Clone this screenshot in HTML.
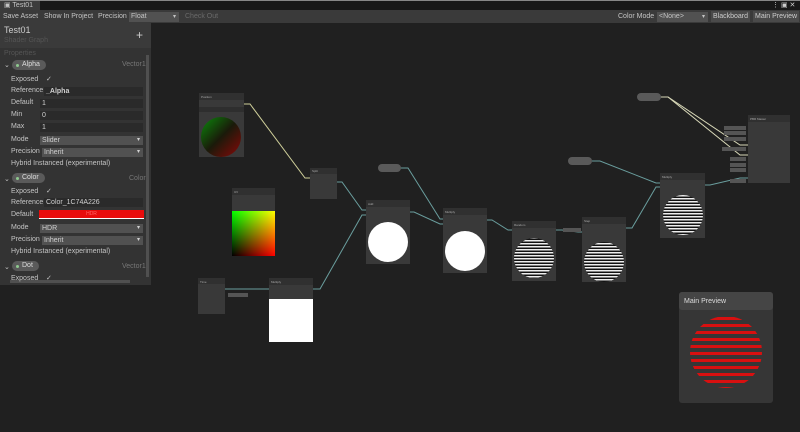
<!DOCTYPE html>
<html><head><style>
*{margin:0;padding:0;box-sizing:border-box}
body{width:800px;height:432px;overflow:hidden;background:#202020;font-family:"Liberation Sans",sans-serif;position:relative;color:#c4c4c4}
.abs{position:absolute}
.t{font-size:7px;white-space:nowrap}
.row{position:absolute;left:11px;font-size:7px;color:#c4c4c4;white-space:nowrap}
.fld{position:absolute;left:40px;width:103px;height:9px;background:#2a2a2a;font-size:7px;padding-left:2px;line-height:9px;color:#d0d0d0}
.dd{position:absolute;left:40px;width:103px;height:9px;background:#515151;font-size:7px;padding-left:2px;line-height:9px;color:#d0d0d0}
.dd:after{content:"▾";position:absolute;right:3px;top:0;font-size:6px}
.pill{position:absolute;height:10px;border-radius:5px;background:#5a5a5a;font-size:7px;line-height:10px;padding:0 6px 0 10px;color:#ddd}
.pill:before{content:"";position:absolute;left:4px;top:4px;width:3px;height:3px;border-radius:2px;background:#8fc98f}
.btn{position:absolute;top:11px;height:11px;background:#4a4a4a;font-size:7px;line-height:11px;padding:0 2px;color:#ccc;white-space:nowrap}
</style></head><body>
<svg class="abs" style="left:0;top:0" width="800" height="432">
<defs>
<linearGradient id="g1" x1="0" y1="0" x2="1" y2="1"><stop offset="0" stop-color="#0a8a0a"/><stop offset="0.5" stop-color="#1a1a0a"/><stop offset="1" stop-color="#8a0808"/></linearGradient>
<linearGradient id="uvx" x1="0" y1="0" x2="1" y2="0"><stop offset="0" stop-color="#000"/><stop offset="1" stop-color="#f00"/></linearGradient>
<linearGradient id="uvy" x1="0" y1="1" x2="0" y2="0"><stop offset="0" stop-color="#000"/><stop offset="1" stop-color="#0f0"/></linearGradient>
<pattern id="str" width="3" height="3" patternUnits="userSpaceOnUse"><rect width="3" height="3" fill="#111"/><rect y="0" width="3" height="1.5" fill="#eee"/></pattern>
<pattern id="str2" width="7" height="7" patternUnits="userSpaceOnUse"><rect width="7" height="7" fill="#363636"/><rect y="2" width="7" height="3" fill="#d81010"/></pattern>
</defs>
<g fill="none" stroke-width="1">
<path d="M242 104 L250 104 L305 178 L312 178" stroke="#cfcf9a"/>
<g stroke="#6a9e9e">
<path d="M334 182 L342 182 L362 210 L368 210"/>
<path d="M310 289 L320 289 L362 215 L368 215"/>
<path d="M400 168 L408 168 L440 219 L446 219"/>
<path d="M407 212 L414 212 L440 224 L446 224"/>
<path d="M484 220 L492 220 L508 230 L514 230"/>
<path d="M552 230 L562 230 L578 232 L584 232"/>
<path d="M623 228 L632 228 L656 187 L662 187"/>
<path d="M592 161 L600 161 L656 183 L662 183"/>
<path d="M702 185 L710 185 L740 178 L750 178"/>
<path d="M224 289 L272 289"/>
</g>
<g stroke="#d8d8b8">
<path d="M660 97 L668 97 L740 145 L750 145"/>
<path d="M660 97 L668 97 L740 155 L750 155"/>
</g>
</g>
<g>
<rect x="199" y="93" width="45" height="64" fill="#393939"/><rect x="199" y="93" width="45" height="7" fill="#303030"/>
<rect x="199" y="107" width="45" height="5" fill="#2e2e2e"/>
<circle cx="221" cy="137" r="20" fill="url(#g1)"/>
<rect x="232" y="188" width="43" height="68" fill="#393939"/><rect x="232" y="188" width="43" height="7" fill="#303030"/>
<rect x="232" y="211" width="43" height="45" fill="url(#uvx)"/><rect x="232" y="211" width="43" height="45" fill="url(#uvy)" style="mix-blend-mode:screen"/>
<rect x="310" y="168" width="27" height="31" fill="#393939"/><rect x="310" y="168" width="27" height="6" fill="#303030"/>
<rect x="366" y="200" width="44" height="64" fill="#393939"/><rect x="366" y="200" width="44" height="7" fill="#303030"/>
<circle cx="388" cy="242" r="20" fill="#fff"/>
<rect x="443" y="208" width="44" height="65" fill="#393939"/><rect x="443" y="208" width="44" height="7" fill="#303030"/>
<circle cx="465" cy="251" r="20" fill="#fff"/>
<rect x="198" y="278" width="27" height="36" fill="#393939"/><rect x="198" y="278" width="27" height="6" fill="#303030"/>
<rect x="269" y="278" width="44" height="64" fill="#393939"/><rect x="269" y="278" width="44" height="7" fill="#303030"/>
<rect x="269" y="299" width="44" height="43" fill="#fff"/>
<rect x="512" y="221" width="44" height="60" fill="#393939"/><rect x="512" y="221" width="44" height="7" fill="#303030"/>
<circle cx="534" cy="258" r="20" fill="url(#str)"/>
<rect x="582" y="217" width="44" height="65" fill="#393939"/><rect x="582" y="217" width="44" height="7" fill="#303030"/>
<circle cx="604" cy="262" r="20" fill="url(#str)"/>
<rect x="660" y="173" width="45" height="65" fill="#393939"/><rect x="660" y="173" width="45" height="7" fill="#303030"/>
<circle cx="683" cy="215" r="20" fill="url(#str)"/>
<rect x="748" y="115" width="42" height="68" fill="#393939"/><rect x="748" y="115" width="42" height="7" fill="#303030"/>
<g fill="#555"><rect x="724" y="126" width="22" height="4"/><rect x="724" y="131" width="22" height="4"/><rect x="724" y="137" width="22" height="4"/><rect x="722" y="147" width="24" height="4"/>
<rect x="730" y="157" width="16" height="4"/><rect x="730" y="163" width="16" height="4"/><rect x="730" y="168" width="16" height="4"/><rect x="730" y="179" width="16" height="4"/>
<rect x="228" y="293" width="20" height="4"/><rect x="563" y="228" width="18" height="4"/></g>
<g fill="#5a5a5a"><rect x="378" y="164" width="23" height="8" rx="4"/><rect x="568" y="157" width="24" height="8" rx="4"/><rect x="637" y="93" width="24" height="8" rx="4"/></g>
<rect x="679" y="292" width="94" height="111" rx="3" fill="#363636"/><rect x="679" y="292" width="94" height="18" rx="3" fill="#454545"/>
<circle cx="726" cy="352" r="36" fill="url(#str2)"/>
</g>
<g fill="#aaa" font-size="3" font-family="Liberation Sans">
<text x="201" y="98">Position</text><text x="234" y="193">UV</text><text x="312" y="172">Split</text><text x="368" y="205">Add</text>
<text x="445" y="213">Multiply</text><text x="200" y="283">Time</text><text x="271" y="283">Multiply</text><text x="514" y="226">Random</text>
<text x="584" y="222">Step</text><text x="662" y="178">Multiply</text><text x="750" y="120">PBR Master</text>
</g>
<text x="684" y="303" fill="#ddd" font-size="7" font-family="Liberation Sans">Main Preview</text>
</svg>
<div class="abs" style="left:0;top:0;width:800px;height:10px;background:#191919"></div>
<div class="abs" style="left:0;top:0;width:800px;height:1px;background:#888"></div>
<div class="abs t" style="left:0;top:1px;width:40px;height:9px;background:#3c3c3c;line-height:9px;padding-left:4px">▣ Test01</div>
<div class="abs t" style="left:772px;top:1px;color:#ccc">⋮ ▣ ✕</div>
<div class="abs" style="left:0;top:10px;width:800px;height:13px;background:#3a3a3a"></div>
<div class="abs t" style="left:3px;top:13px">Save Asset</div>
<div class="abs t" style="left:44px;top:13px">Show In Project</div>
<div class="abs t" style="left:98px;top:13px">Precision</div>
<div class="abs t" style="left:129px;top:12px;width:50px;height:10px;background:#515151;padding-left:2px;line-height:10px">Float <span style="float:right;font-size:6px;padding-right:3px">▾</span></div>
<div class="abs t" style="left:185px;top:13px;color:#6a6a6a">Check Out</div>
<div class="abs t" style="left:618px;top:13px">Color Mode</div>
<div class="abs t" style="left:657px;top:12px;width:51px;height:10px;background:#515151;padding-left:2px;line-height:10px">&lt;None&gt; <span style="float:right;font-size:6px;padding-right:3px">▾</span></div>
<div class="btn" style="left:711px">Blackboard</div>
<div class="btn" style="left:753px">Main Preview</div>
<div class="abs" style="left:0;top:23px;width:151px;height:262px;background:#333"></div>
<div class="abs" style="left:0;top:23px;width:151px;height:25px;background:#3a3a3a"></div>
<div class="abs t" style="left:4px;top:25px;font-size:9px;color:#ccc">Test01</div>
<div class="abs t" style="left:4px;top:37px;color:#555">Shader Graph</div>
<div class="abs t" style="left:136px;top:28px;font-size:12px;color:#ccc">+</div>
<div class="abs t" style="left:4px;top:50px;color:#555">Properties</div>
<div class="abs" style="left:146px;top:55px;width:3px;height:222px;background:#505050"></div>
<div class="abs" style="left:10px;top:280px;width:120px;height:3px;background:#505050"></div>
<div class="abs t" style="left:4px;top:61px">⌄</div>
<div class="pill" style="left:12px;top:60px">Alpha</div>
<div class="abs t" style="left:122px;top:61px;color:#777">Vector1</div>
<div class="row" style="top:75px">Exposed &nbsp;&nbsp;&nbsp;✓</div>
<div class="row" style="top:87px">Reference</div><div class="fld" style="top:87px;font-weight:bold;left:44px;width:99px">_Alpha</div>
<div class="row" style="top:99px">Default</div><div class="fld" style="top:99px">1</div>
<div class="row" style="top:111px">Min</div><div class="fld" style="top:111px">0</div>
<div class="row" style="top:123px">Max</div><div class="fld" style="top:123px">1</div>
<div class="row" style="top:136px">Mode</div><div class="dd" style="top:136px">Slider</div>
<div class="row" style="top:148px">Precision</div><div class="dd" style="top:148px;left:42px;width:101px">Inherit</div>
<div class="row" style="top:160px">Hybrid Instanced (experimental)</div>
<div class="abs t" style="left:4px;top:175px">⌄</div>
<div class="pill" style="left:12px;top:173px">Color</div>
<div class="abs t" style="left:129px;top:175px;color:#777">Color</div>
<div class="row" style="top:187px">Exposed &nbsp;&nbsp;&nbsp;✓</div>
<div class="row" style="top:199px">Reference</div><div class="fld" style="top:198px;left:44px;width:99px">Color_1C74A226</div>
<div class="row" style="top:211px">Default</div><div class="abs" style="left:39px;top:210px;width:105px;height:9px;background:#e80c0c;font-size:5px;color:#f66;text-align:center;line-height:9px;border-bottom:1px solid #fff">HDR</div>
<div class="row" style="top:224px">Mode</div><div class="dd" style="top:224px">HDR</div>
<div class="row" style="top:236px">Precision</div><div class="dd" style="top:236px;left:42px;width:101px">Inherit</div>
<div class="row" style="top:248px">Hybrid Instanced (experimental)</div>
<div class="abs t" style="left:4px;top:263px">⌄</div>
<div class="pill" style="left:12px;top:261px">Dot</div>
<div class="abs t" style="left:122px;top:263px;color:#777">Vector1</div>
<div class="row" style="top:274px">Exposed &nbsp;&nbsp;&nbsp;✓</div>
</body></html>
